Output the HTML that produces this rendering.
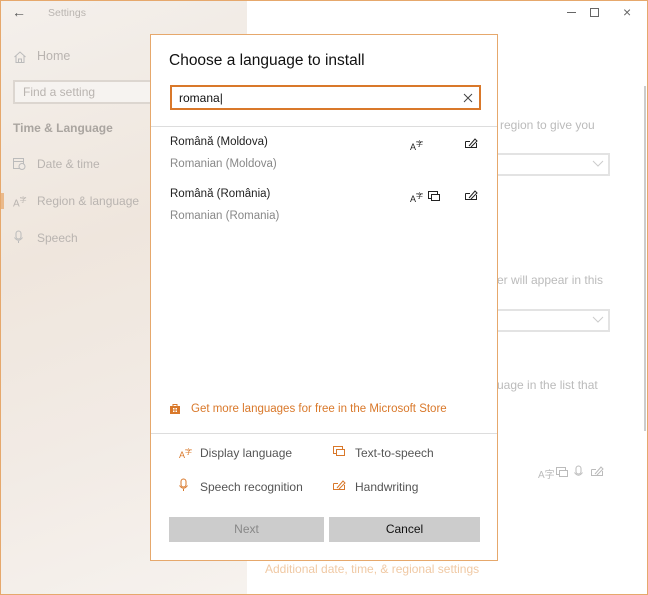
<!DOCTYPE html>
<html><head><meta charset="utf-8"><style>
*{margin:0;padding:0;box-sizing:border-box}
body{width:648px;height:595px;overflow:hidden;font-family:"Liberation Sans",sans-serif;background:#fff;position:relative}
.win{position:absolute;left:0;top:0;width:648px;height:595px;border:1px solid #e6a86c}
.side{position:absolute;left:1px;top:1px;width:246px;height:593px;background:linear-gradient(160deg,#f4f0ec 0%,#efe6dd 40%,#f2ebe5 70%,#f6f2ee 100%)}
.t{position:absolute;white-space:nowrap}
.g{color:#b9b4b0}
.dlg{position:absolute;left:150px;top:34px;width:348px;height:527px;background:#fff;border:1px solid #e6a86c}
.btn{position:absolute;top:482px;height:25px;background:#ccc;font-size:12px;text-align:center;line-height:25px}
.sep{position:absolute;left:0;width:346px;height:1px;background:#ddd}
svg{position:absolute;fill:none;stroke-width:1}
.dd{position:absolute;left:490px;width:120px;height:23px;border:2px solid #e3e3e3;border-left:none}
</style></head><body>
<div class="win"></div>
<div class="side"></div>
<div class="t" style="left:12px;top:4px;font-size:14px;color:#555">&#8592;</div>
<div class="t g" style="left:48px;top:7px;font-size:10.5px">Settings</div>
<div style="position:absolute;left:567px;top:12px;width:9px;height:1px;background:#666"></div>
<div style="position:absolute;left:590px;top:8px;width:9px;height:9px;border:1px solid #666"></div>
<div class="t" style="left:623px;top:4px;font-size:14px;color:#666">&#215;</div>
<div style="position:absolute;left:644px;top:86px;width:2px;height:345px;background:#ccc"></div>
<svg style="left:13px;top:50px" width="14" height="14" stroke="#bbb"><path d="M1.5 7 L7 2 L12.5 7 M3 6 V12.5 H11 V6 M5.5 12.5 V9 H8.5 V12.5"/></svg>
<div class="t g" style="left:37px;top:49px;font-size:12.5px">Home</div>
<div style="position:absolute;left:13px;top:80px;width:140px;height:24px;border:2px solid #dcd6d0;background:#f6f3f0"></div>
<div class="t g" style="left:23px;top:85px;font-size:12px">Find a setting</div>
<div class="t" style="left:13px;top:121px;font-size:12px;color:#aaa5a0;font-weight:bold">Time &amp; Language</div>
<svg style="left:12px;top:156px" width="14" height="14" stroke="#bbb"><rect x="1.5" y="2.5" width="10" height="10"/><path d="M1.5 5.5H11.5"/><circle cx="10" cy="10.5" r="3" fill="#f1ebe5"/></svg>
<div class="t g" style="left:37px;top:157px;font-size:12px">Date &amp; time</div>
<div style="position:absolute;left:1px;top:193px;width:3px;height:16px;background:#eab98a"></div>
<div class="t g" style="left:13px;top:195px;font-size:10px">A<sup style="font-size:7px">字</sup></div>
<div class="t g" style="left:37px;top:194px;font-size:12px">Region &amp; language</div>
<svg style="left:13px;top:230px" width="12" height="14" stroke="#bbb"><rect x="3" y="1" width="5" height="8" rx="2.5"/><path d="M1.5 7.5 Q5.5 13 9.5 7.5 M5.5 11 V13"/></svg>
<div class="t g" style="left:37px;top:231px;font-size:12px">Speech</div>
<div class="t" style="left:500px;top:118px;font-size:12px;color:#bbb">region to give you</div>
<div class="dd" style="top:153px"></div>
<svg style="left:592px;top:160px" width="12" height="8" stroke="#ccc"><path d="M1 1 L6 6 L11 1"/></svg>
<div class="t" style="left:497px;top:273px;font-size:12px;color:#bbb">er will appear in this</div>
<div class="dd" style="top:309px"></div>
<svg style="left:592px;top:316px" width="12" height="8" stroke="#ccc"><path d="M1 1 L6 6 L11 1"/></svg>
<div class="t" style="left:497px;top:378px;font-size:12px;color:#bbb">uage in the list that</div>
<div class="t" style="left:538px;top:466px;font-size:10px;color:#bbb">A字</div>
<svg style="left:555px;top:465px" width="14" height="14" stroke="#bbb"><rect x="1.5" y="2.5" width="9" height="7"/><rect x="4.5" y="5.5" width="8" height="6" fill="#fff"/></svg>
<svg style="left:573px;top:465px" width="12" height="14" stroke="#bbb"><rect x="3" y="1" width="5" height="8" rx="2.5"/><path d="M1.5 7.5 Q5.5 13 9.5 7.5"/></svg>
<svg style="left:590px;top:465px" width="14" height="12" stroke="#bbb"><path d="M1.5 4.5 H6 M1.5 4.5 V10.5 H12.5 V6 M5 9 L11 2 L13 4 L7 10"/></svg>
<div class="t" style="left:265px;top:562px;font-size:12px;color:#f0c9a4">Additional date, time, &amp; regional settings</div>
<div class="dlg">
<div class="t" style="left:18px;top:17px;font-size:15.5px;color:#111">Choose a language to install</div>
<div style="position:absolute;left:19px;top:50px;width:311px;height:25px;border:2px solid #d9782a"></div>
<div class="t" style="left:28px;top:56px;font-size:12px;color:#111">romana|</div>
<svg style="left:312px;top:58px" width="10" height="10" stroke="#444"><path d="M1 1 L9 9 M9 1 L1 9"/></svg>
<div class="sep" style="top:91px"></div>
<div class="t" style="left:19px;top:101px;font-size:11.5px;color:#222">Română (Moldova)</div>
<div class="t" style="left:19px;top:123px;font-size:11.5px;color:#888">Romanian (Moldova)</div>
<div class="t" style="left:259px;top:104px;font-size:9px;color:#222">A<sup style="font-size:7px">字</sup></div>
<svg style="left:313px;top:102px" width="14" height="12" stroke="#222"><path d="M1.5 4.5 H6 M1.5 4.5 V10.5 H12.5 V6 M5 9 L11 2 L13 4 L7 10"/></svg>
<div class="t" style="left:19px;top:153px;font-size:11.5px;color:#222">Română (România)</div>
<div class="t" style="left:19px;top:175px;font-size:11.5px;color:#888">Romanian (Romania)</div>
<div class="t" style="left:259px;top:156px;font-size:9px;color:#222">A<sup style="font-size:7px">字</sup></div>
<svg style="left:276px;top:154px" width="14" height="14" stroke="#222"><rect x="1.5" y="2.5" width="9" height="7"/><rect x="4.5" y="5.5" width="8" height="6" fill="#fff"/></svg>
<svg style="left:313px;top:154px" width="14" height="12" stroke="#222"><path d="M1.5 4.5 H6 M1.5 4.5 V10.5 H12.5 V6 M5 9 L11 2 L13 4 L7 10"/></svg>
<svg style="left:18px;top:368px" width="12" height="12"><path d="M1 3 H11 V11 H1 Z" fill="#d9782a"/><path d="M4 3 V1.5 H8 V3" stroke="#d9782a"/><rect x="4" y="5" width="1.5" height="1.5" fill="#fff"/><rect x="6.5" y="5" width="1.5" height="1.5" fill="#fff"/><rect x="4" y="7.5" width="1.5" height="1.5" fill="#fff"/><rect x="6.5" y="7.5" width="1.5" height="1.5" fill="#fff"/></svg>
<div class="t" style="left:40px;top:368px;font-size:11.5px;color:#d9782a">Get more languages for free in the Microsoft Store</div>
<div class="sep" style="top:398px"></div>
<div class="t" style="left:28px;top:412px;font-size:9px;color:#d9782a">A<sup style="font-size:7px">字</sup></div>
<div class="t" style="left:49px;top:411px;font-size:12px;color:#555">Display language</div>
<svg style="left:181px;top:409px" width="14" height="14" stroke="#d9782a"><rect x="1.5" y="2.5" width="9" height="7"/><rect x="4.5" y="5.5" width="8" height="6" fill="#fff"/></svg>
<div class="t" style="left:204px;top:411px;font-size:12px;color:#555">Text-to-speech</div>
<svg style="left:27px;top:443px" width="12" height="14" stroke="#d9782a"><rect x="3" y="1" width="5" height="8" rx="2.5"/><path d="M1.5 7.5 Q5.5 13 9.5 7.5 M5.5 11 V13"/></svg>
<div class="t" style="left:49px;top:445px;font-size:12px;color:#555">Speech recognition</div>
<svg style="left:181px;top:444px" width="14" height="12" stroke="#d9782a"><path d="M1.5 4.5 H6 M1.5 4.5 V10.5 H12.5 V6 M5 9 L11 2 L13 4 L7 10"/></svg>
<div class="t" style="left:204px;top:445px;font-size:12px;color:#555">Handwriting</div>
<div class="btn" style="left:18px;width:155px;color:#888">Next</div>
<div class="btn" style="left:178px;width:151px;color:#111">Cancel</div>
</div>
</body></html>
